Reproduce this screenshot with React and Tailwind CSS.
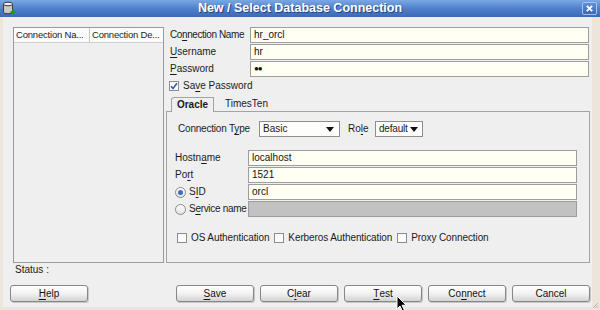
import React from "react";

function U({ children }) {
  return <span className="underline underline-offset-[1.5px] decoration-[1px]">{children}</span>;
}

function Field({ value, disabled, className = "" }) {
  return (
    <div
      className={`h-[16px] border border-[#9d9d9d] flex items-center px-[3px] text-[#111] ${
        disabled ? "bg-[#c2c2c2]" : "bg-[#fffff3]"
      } ${className}`}
    >
      {value}
    </div>
  );
}

function Box({ checked }) {
  return (
    <span className="w-[10px] h-[10px] border border-[#8c8c8c] bg-[#fbfbfb] flex items-center justify-center shrink-0">
      {checked && (
        <svg width="8" height="8" viewBox="0 0 8 8">
          <path d="M1 4.2 L3 6.4 L7 1.2" stroke="#2d5fae" strokeWidth="1.6" fill="none" />
        </svg>
      )}
    </span>
  );
}

function Radio({ checked }) {
  return (
    <span className="w-[11px] h-[11px] rounded-full border border-[#8a8a8a] bg-linear-to-b from-[#ffffff] to-[#e2e2e2] flex items-center justify-center shrink-0">
      {checked && <span className="w-[5px] h-[5px] rounded-full bg-[#3b6dc2]" />}
    </span>
  );
}

function Arrow() {
  return (
    <svg width="8" height="5" viewBox="0 0 8 5" className="shrink-0">
      <path d="M0 0 H8 L4 5 Z" fill="#111" />
    </svg>
  );
}

function Btn({ children }) {
  return (
    <div className="h-[17px] w-[78px] rounded-[3px] border border-[#868686] bg-linear-to-b from-[#ffffff] via-[#f2f2f2] to-[#d3d3d3] shadow-[1px_1px_0_#c9c9c9] flex items-center justify-center text-[#111]">
      {children}
    </div>
  );
}

export default function App() {
  return (
    <div className="relative w-[600px] h-[310px] overflow-hidden bg-[#ebe5dc] flex flex-col font-['Liberation_Sans',Arial,sans-serif] text-[10px] text-[#1b1b1b] leading-none">
      {/* Title bar */}
      <div className="relative h-[17px] shrink-0 bg-linear-to-b from-[#7ba7e4] via-[#4f80cb] to-[#3b6ab4] flex items-center justify-center">
        <svg className="absolute left-[2px] top-[1px]" width="14" height="15" viewBox="0 0 14 15">
          <path d="M1.5 3 V11 A4.5 1.8 0 0 0 10.5 11 V3" fill="#c9c9c9" stroke="#3a3a3a" strokeWidth="1" />
          <ellipse cx="6" cy="3" rx="4.5" ry="1.8" fill="#f0f0f0" stroke="#3a3a3a" strokeWidth="1" />
          <path d="M8.5 11 H13.5 M11 8.5 V13.5" stroke="#1f9a1f" strokeWidth="2" />
        </svg>
        <span className="text-white font-bold text-[12.5px] [text-shadow:1px_1px_0_#24467e]">
          New / Select Database Connection
        </span>
        <div className="absolute right-[3px] top-[2px] w-[15px] h-[13px] rounded-[2px] border border-[#a9c3ea] bg-linear-to-b from-[#5e8fd6] to-[#3a68b1] flex items-center justify-center">
          <svg width="7" height="7" viewBox="0 0 7 7">
            <path d="M0.8 0.8 L6.2 6.2 M6.2 0.8 L0.8 6.2" stroke="#fff" strokeWidth="1.8" />
          </svg>
        </div>
      </div>

      {/* Body */}
      <div className="flex-1 ml-[3px] mr-[8px] mb-[3px] bg-[#efefef] flex flex-col pt-[10px]">
        <div className="flex h-[236px] pl-[10px] gap-[2px]">
          {/* Left table */}
          <div className="w-[151px] h-full border border-[#9b9b9b] bg-[#efefef] flex flex-col">
            <div className="h-[15px] flex bg-[#fbfbfb] border-b border-[#cfcfcf] text-[9.5px] tracking-[-0.2px]">
              <div className="w-[76px] border-r border-[#c8c8c8] flex items-center pl-[2px] whitespace-nowrap">
                Connection Na...
              </div>
              <div className="flex-1 flex items-center pl-[2px] whitespace-nowrap">
                Connection De...
              </div>
            </div>
          </div>

          {/* Right column */}
          <div className="w-[424px] h-full flex flex-col">
            <div className="flex flex-col gap-[1px]">
              <div className="flex h-[16px] items-center">
                <span className="w-[84px] pl-[4px] whitespace-nowrap tracking-[-0.4px]">
                  Co<U>n</U>nection Name
                </span>
                <Field value="hr_orcl" className="flex-1 mr-[1px]" />
              </div>
              <div className="flex h-[16px] items-center">
                <span className="w-[84px] pl-[4px]">
                  <U>U</U>sername
                </span>
                <Field value="hr" className="flex-1 mr-[1px]" />
              </div>
              <div className="flex h-[16px] items-center">
                <span className="w-[84px] pl-[4px]">
                  <U>P</U>assword
                </span>
                <Field value={<span className="text-[8px] tracking-[-1px]">●●</span>} className="flex-1 mr-[1px]" />
              </div>
            </div>

            <div className="flex items-center h-[12px] mt-[3px] pl-[3px] gap-[4px]">
              <Box checked />
              <span>
                Sa<U>v</U>e Password
              </span>
            </div>

            {/* Tabs */}
            <div className="flex items-end h-[14px] mt-[5px] pl-[5px]">
              <div className="relative z-10 h-[15px] -mb-[1px] w-[43px] border border-b-0 border-[#a3a3a3] rounded-tl-[3px] bg-[#efefef] flex items-center justify-center font-bold">
                Oracle
              </div>
              <div className="h-[14px] flex items-center pl-[11px]">TimesTen</div>
            </div>

            <div className="flex-1 border border-[#a3a3a3] flex flex-col">
              <div className="flex items-center h-[16px] mt-[9px] pl-[11px]">
                <span className="w-[81px] whitespace-nowrap tracking-[-0.2px]">
                  Connection T<U>y</U>pe
                </span>
                <div className="w-[81px] h-[16px] border border-[#8e8e8e] bg-[#fdfdfb] flex items-center justify-between pl-[3px] pr-[5px]">
                  <span>Basic</span>
                  <Arrow />
                </div>
                <span className="ml-[8px] w-[27px]">
                  Ro<U>l</U>e
                </span>
                <div className="w-[48px] h-[16px] border border-[#8e8e8e] bg-[#fdfdfb] flex items-center justify-between pl-[3px] pr-[4px]">
                  <span className="tracking-[-0.2px]">default</span>
                  <Arrow />
                </div>
              </div>

              <div className="flex flex-col gap-[1px] mt-[13px] pl-[8px] pr-[12px]">
                <div className="flex h-[16px] items-center">
                  <span className="w-[73px]">
                    Hostn<U>a</U>me
                  </span>
                  <Field value="localhost" className="flex-1" />
                </div>
                <div className="flex h-[16px] items-center">
                  <span className="w-[73px]">
                    Po<U>r</U>t
                  </span>
                  <Field value="1521" className="flex-1" />
                </div>
                <div className="flex h-[16px] items-center">
                  <span className="w-[73px] flex items-center gap-[3px]">
                    <Radio checked />
                    <span>
                      S<U>I</U>D
                    </span>
                  </span>
                  <Field value="orcl" className="flex-1" />
                </div>
                <div className="flex h-[16px] items-center">
                  <span className="w-[73px] flex items-center gap-[3px] whitespace-nowrap">
                    <Radio />
                    <span className="tracking-[-0.3px]">
                      S<U>e</U>rvice name
                    </span>
                  </span>
                  <Field value="" disabled className="flex-1" />
                </div>
              </div>

              <div className="flex items-center h-[11px] mt-[15px] pl-[10px] tracking-[-0.1px]">
                <Box />
                <span className="ml-[4px]">OS Authentication</span>
                <span className="ml-[5px]">
                  <Box />
                </span>
                <span className="ml-[4px]">Kerberos Authentication</span>
                <span className="ml-[5px]">
                  <Box />
                </span>
                <span className="ml-[4px]">Proxy Connection</span>
              </div>
            </div>
          </div>
        </div>

        <div className="h-[13px] flex items-center pl-[12px]">Status :</div>

        <div className="flex items-center mt-[9px] h-[17px] pl-[7px] pr-[2px]">
          <Btn>
            <U>H</U>elp
          </Btn>
          <div className="flex-1" />
          <div className="flex gap-[6px]">
            <Btn>
              <U>S</U>ave
            </Btn>
            <Btn>
              C<U>l</U>ear
            </Btn>
            <Btn>
              <U>T</U>est
            </Btn>
            <Btn>
              Co<U>n</U>nect
            </Btn>
            <Btn>Cancel</Btn>
          </div>
        </div>
      </div>

      {/* resize grip */}
      <svg className="absolute right-[1px] bottom-[1px]" width="7" height="7" viewBox="0 0 7 7">
        <path d="M6 1 L1 6 M6 3.5 L3.5 6 M6 5.5 L5.5 6" stroke="#b8b2a8" strokeWidth="1" />
      </svg>

      {/* mouse cursor */}
      <svg className="absolute left-[396px] top-[295px]" width="12" height="18" viewBox="0 0 12 18">
        <path d="M1 1 L1 14 L4 11 L6.5 16.5 L8.6 15.6 L6.1 10.2 L10.2 10.2 Z" fill="#000" stroke="#fff" strokeWidth="1" />
      </svg>
    </div>
  );
}
